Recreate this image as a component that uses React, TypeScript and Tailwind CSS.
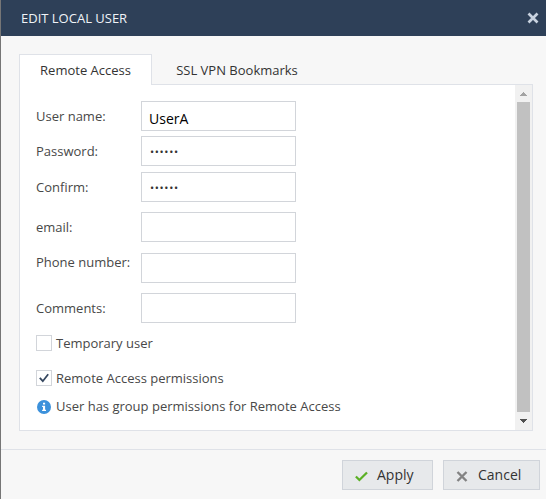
import { useState } from "react";
import clsx from "clsx";

const TABS = ["Remote Access", "SSL VPN Bookmarks"];

const FIELDS = [
  { label: "User name:", type: "text", value: "UserA", row: "mt-4", labelBox: "h-[30px]" },
  { label: "Password:", type: "password", value: "••••••", row: "mt-[5px]", labelBox: "h-[30px]" },
  { label: "Confirm:", type: "password", value: "••••••", row: "mt-1.5", labelBox: "h-[30px]" },
  { label: "email:", type: "text", value: "", row: "mt-2.5", labelBox: "h-[30px]" },
  { label: "Phone number:", type: "text", value: "", row: "mt-[11px]", labelBox: "h-[18px]" },
  { label: "Comments:", type: "text", value: "", row: "mt-2.5", labelBox: "h-[30px]" },
];

function CloseIcon() {
  return (
    <svg width="12" height="12" viewBox="0 0 12 12" fill="none" stroke="#c9d3e0" strokeWidth="2.7">
      <path d="M1.5 1.5 10.5 10.5M10.5 1.5 1.5 10.5" />
    </svg>
  );
}

function InfoIcon() {
  return (
    <svg className="ml-px" width="14" height="14" viewBox="0 0 14 14">
      <circle cx="7" cy="7" r="7" fill="#3c91db" />
      <path d="M6 2.8h2.1v1.8H6zM5.1 5.8h3v4h.9V11H5.1V9.8H6V7h-.9z" fill="#fff" />
    </svg>
  );
}

function Checkbox({ label, defaultChecked = false }: { label: string; defaultChecked?: boolean }) {
  const [checked, setChecked] = useState(defaultChecked);

  return (
    <button
      type="button"
      role="checkbox"
      aria-checked={checked}
      className="flex h-4 items-center gap-1"
      onClick={() => setChecked(!checked)}
    >
      <span className="flex size-4 items-center justify-center border border-[#d2d5da] bg-white">
        {checked ? (
          <svg width="14" height="14" viewBox="0 0 14 14" fill="none" stroke="#34465f" strokeWidth="1.8">
            <path d="M2.8 6.9 5.8 10.2 11.2 3.2" />
          </svg>
        ) : null}
      </span>
      <span>{label}</span>
    </button>
  );
}

function Scrollbar() {
  return (
    <div className="flex w-[17px] flex-col items-center bg-[#f1f1f1]">
      <div className="flex h-[17px] items-center">
        <svg width="7" height="4" viewBox="0 0 7 4" shapeRendering="crispEdges">
          <path d="M3 0h1v1h1v1h1v1h1v1H0V3h1V2h1V1h1z" fill="#a3a3a3" />
        </svg>
      </div>
      <div className="w-[13px] flex-1 bg-[#c1c1c1]" />
      <div className="flex h-[18px] items-center">
        <svg width="7" height="4" viewBox="0 0 7 4" shapeRendering="crispEdges">
          <path d="M0 0h7v1H6v1H5v1H4v1H3V3H2V2H1V1H0z" fill="#505050" />
        </svg>
      </div>
    </div>
  );
}

export default function App() {
  const [tab, setTab] = useState(TABS[0]);

  return (
    <div className="h-[502px] w-[550px] bg-white font-['Open_Sans',sans-serif] text-[13px] leading-4 text-[#484848]">
      <div className="flex h-[499px] w-[546px] flex-col border-l border-[#767676] bg-[#f7f7f7]">
        <header className="flex h-9 items-center justify-between bg-[#2e4058] pr-[7px] pl-5 text-[#f0f3f7]">
          <h1>EDIT LOCAL USER</h1>
          <button type="button" aria-label="Close">
            <CloseIcon />
          </button>
        </header>

        <main className="mt-[18px] mr-[13px] ml-[18px] flex h-[377px] flex-col">
          <div className="flex h-[31px] shrink-0 text-[#333]">
            {TABS.map((name) => (
              <button
                key={name}
                type="button"
                className={clsx(
                  "relative z-10 h-[31px] border border-b-0 pb-px",
                  name === tab ? "border-[#dfe2e8] bg-white" : "border-transparent",
                  name === TABS[0] ? "w-[133px]" : "w-[170px]"
                )}
                onClick={() => setTab(name)}
              >
                {name}
              </button>
            ))}
          </div>

          <section className="-mt-px flex flex-1 justify-between border border-[#dfe2e8] bg-white">
            <div className="pl-4">
              {FIELDS.map((field) => (
                <label key={field.label} className={clsx("flex h-[30px]", field.row)}>
                  <span className={clsx("flex w-[105px] items-center", field.labelBox)}>
                    {field.label}
                  </span>
                  <span
                    className={clsx(
                      "flex h-[30px] w-[155px] items-center border border-[#d2d5da] bg-white",
                      field.type === "password"
                        ? "pt-px pl-2 text-[11px] tracking-[0.65px] text-[#333]"
                        : "pt-1.5 pl-[7px] text-sm text-black"
                    )}
                  >
                    {field.value}
                  </span>
                </label>
              ))}

              <div className="mt-3">
                <Checkbox label="Temporary user" />
              </div>
              <div className="mt-[19px]">
                <Checkbox label="Remote Access permissions" defaultChecked />
              </div>
              <div className="mt-[13px] flex h-4 items-center gap-[5px]">
                <InfoIcon />
                <span className="-mt-0.5">User has group permissions for Remote Access</span>
              </div>
            </div>
            <Scrollbar />
          </section>
        </main>

        <footer className="mt-[18px] flex justify-end gap-2.5 border-t border-[#dfe2e8] pt-2.5 pr-1.5 text-sm text-[#333]">
          <button
            type="button"
            className="flex h-[30px] w-[91px] items-center border border-[#d0d4da] bg-[#e7e9eb] pl-3"
          >
            <svg className="mt-0.5" width="13" height="11" viewBox="0 0 13 11" fill="none" stroke="#5bb025" strokeWidth="2.3">
              <path d="M.9 5.5 4.4 9 12 1.5" />
            </svg>
            <span className="ml-[9px]">Apply</span>
          </button>
          <button
            type="button"
            className="flex h-[30px] w-[97px] items-center border border-[#d0d4da] bg-[#e7e9eb] pl-3"
          >
            <svg className="mt-0.5" width="12" height="11" viewBox="0 0 12 11" fill="none" stroke="#838383" strokeWidth="2.4">
              <path d="M1.5 1 10.5 10M10.5 1 1.5 10" />
            </svg>
            <span className="ml-2.5">Cancel</span>
          </button>
        </footer>
      </div>
    </div>
  );
}
